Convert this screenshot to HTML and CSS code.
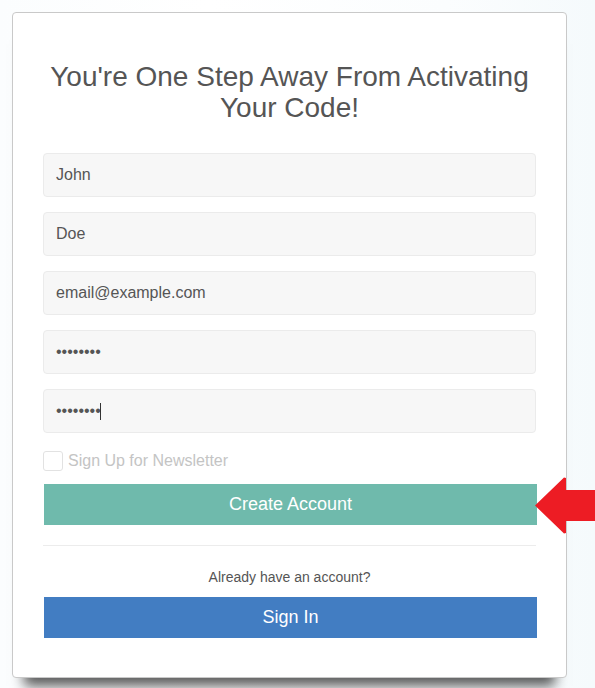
FILE: index.html
```html
<!DOCTYPE html>
<html lang="en">
<head>
<meta charset="utf-8">
<title>Activate Your Code</title>
<link rel="stylesheet" href="styles.css">
</head>
<body>
<div class="page">
  <div class="card">
    <h1 class="title">You're One Step Away From Activating Your Code!</h1>
    <form class="form">
      <input class="field" type="text" value="John">
      <input class="field" type="text" value="Doe">
      <input class="field" type="email" value="email@example.com">
      <input class="field" type="password" value="12345678">
      <div class="field-wrap">
        <input class="field" type="password" value="12345678">
        <span class="caret"></span>
      </div>
      <label class="check-row">
        <input class="check" type="checkbox">
        <span class="check-label">Sign Up for Newsletter</span>
      </label>
      <button class="btn btn-create" type="button">Create Account</button>
    </form>
    <hr class="divider">
    <p class="already">Already have an account?</p>
    <button class="btn btn-signin" type="button">Sign In</button>
  </div>
  <svg class="arrow" width="60" height="57" viewBox="0 0 60 57" aria-hidden="true">
    <polygon points="0,28.5 29,0.5 31,1 31,13 60,13 60,44 31,44 31,56 29,56.5" fill="#ed1c24"/>
  </svg>
</div>
</body>
</html>
```

FILE: styles.css
```css
* { box-sizing: border-box; }

html, body {
  margin: 0;
  padding: 0;
}

body {
  font-family: "Liberation Sans", Arial, sans-serif;
  background: linear-gradient(90deg, #fbfdfe 0%, #ffffff 35%, #fbfdfe 75%, #f5fafc 100%);
  min-height: 688px;
  overflow: hidden;
}

.page {
  position: relative;
  padding: 12px;
}

.card {
  width: 555px;
  background: #fff;
  border: 1px solid #c9c9c9;
  border-radius: 4px;
  padding: 30px 30px 39px;
  box-shadow: 0 20px 12px -12px rgba(0, 0, 0, 0.65);
}

.title {
  margin: 19px 0 29px;
  font-size: 28px;
  line-height: 1.1;
  font-weight: normal;
  color: #555;
  text-align: center;
}

.form {
  margin: 0;
}

.field {
  display: block;
  width: 100%;
  height: 44px;
  margin: 0 0 15px;
  padding: 0 12px;
  border: 1px solid #ebebeb;
  border-radius: 4px;
  background: #f7f7f7;
  font-family: "Liberation Sans", Arial, sans-serif;
  font-size: 16px;
  color: #555;
  outline: none;
}

.field-wrap {
  position: relative;
}

.field-wrap .field {
  margin-bottom: 18px;
}

.caret {
  position: absolute;
  left: 57px;
  top: 14px;
  width: 1px;
  height: 17px;
  background: #333;
}

.check-row {
  display: flex;
  align-items: center;
  gap: 5px;
  height: 20px;
  margin-bottom: 13px;
}

.check {
  appearance: none;
  -webkit-appearance: none;
  margin: 0;
  width: 20px;
  height: 20px;
  border: 1px solid #e2e2e2;
  border-radius: 3px;
  background: #fff;
}

.check-label {
  font-size: 16px;
  color: #c4c4c4;
}

.btn {
  display: block;
  width: 100%;
  height: 41px;
  border: none;
  border-radius: 0;
  margin: 0 0 0 1px;
  padding: 0;
  color: #fff;
  font-family: "Liberation Sans", Arial, sans-serif;
  font-size: 18px;
}

.btn-create {
  background: #6fbaac;
}

.btn-signin {
  background: #427dc2;
}

.divider {
  margin: 20px 0 0;
  border: none;
  border-top: 1px solid #ececec;
  height: 0;
}

.already {
  margin: 21px 0 10px;
  font-size: 14px;
  line-height: 20px;
  color: #555;
  text-align: center;
}

.arrow {
  position: absolute;
  left: 535px;
  top: 477px;
}
```
